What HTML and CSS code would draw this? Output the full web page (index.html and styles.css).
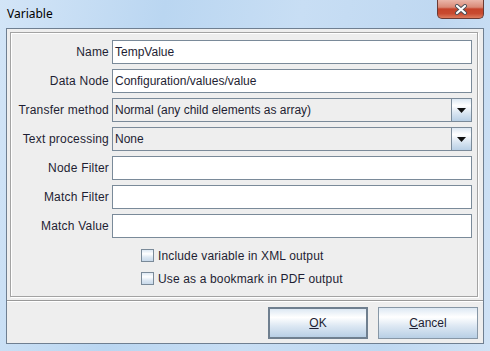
FILE: index.html
```html
<!DOCTYPE html>
<html>
  <head>
    <meta charset=utf-8>
    <title>Variable</title>
    <link rel="stylesheet" href="styles.css">
  </head>
  <body>
    <div class="window">
      <div class="titlebar">
        <span class="title">Variable</span>
        <div class="close">
          <svg width="14" height="11" viewBox="0 0 14 11">
            <path d="M3 2 L11 9 M11 2 L3 9" stroke="#4a4f58" stroke-width="4" stroke-linecap="round"/>
            <path d="M3 2 L11 9 M11 2 L3 9" stroke="#ffffff" stroke-width="2.2" stroke-linecap="round"/>
          </svg>
        </div>
      </div>
      <div class="client">
        <div class="panel">
          <div class="form">
            <label>Name</label>
            <div class="field">TempValue</div>
            <label>Data Node</label>
            <div class="field">Configuration/values/value</div>
            <label>Transfer method</label>
            <div class="combo">
              <span class="combo-value">Normal (any child elements as array)</span>
              <span class="combo-arrow"><svg width="9" height="5"><polygon points="0,0 9,0 4.5,5" fill="#111"/></svg></span>
            </div>
            <label>Text processing</label>
            <div class="combo">
              <span class="combo-value">None</span>
              <span class="combo-arrow"><svg width="9" height="5"><polygon points="0,0 9,0 4.5,5" fill="#111"/></svg></span>
            </div>
            <label>Node Filter</label>
            <div class="field"></div>
            <label>Match Filter</label>
            <div class="field"></div>
            <label>Match Value</label>
            <div class="field"></div>
          </div>
          <div class="checks">
            <div class="check"><span class="box"></span>Include variable in XML output</div>
            <div class="check"><span class="box"></span>Use as a bookmark in PDF output</div>
          </div>
        </div>
        <div class="buttons">
          <button class="btn default"><u>O</u>K</button>
          <button class="btn"><u>C</u>ancel</button>
        </div>
      </div>
    </div>
  </body>
</html>
```

FILE: styles.css
```css
body {
  margin: 0;
  background: #ffffff;
}

.window {
  width: 490px;
  height: 351px;
  display: flex;
  flex-direction: column;
  background: linear-gradient(100deg, #d3e5f7 0%, #bad6f1 30%, #c8def4 55%, #bfd8f1 80%, #d0e2f5 100%);
  font-family: "Liberation Sans", Arial, sans-serif;
  font-size: 12px;
  color: #1e1e33;
}

.titlebar {
  height: 28px;
  display: flex;
  align-items: flex-start;
}

.title {
  font-family: "Noto Sans", sans-serif;
  font-size: 12px;
  color: #000;
  padding: 5px 0 0 7px;
}

.close {
  margin-left: auto;
  margin-right: 6px;
  width: 45px;
  height: 18px;
  border: 1px solid #6a3a34;
  border-top: none;
  border-radius: 0 0 5px 5px;
  background: linear-gradient(#eab6a9 0%, #d98a77 40%, #c5432a 50%, #c84a30 75%, #dd7c5e 100%);
  display: flex;
  align-items: center;
  justify-content: center;
}

.client {
  margin: 0 6px;
  height: 316px;
  box-sizing: border-box;
  border: 1px solid #6f7f91;
  background: #eeeeee;
  display: flex;
  flex-direction: column;
}

.panel {
  margin: 3px 5px 0 3px;
  height: 265px;
  box-sizing: border-box;
  border: 1px solid #a3a3a3;
  box-shadow: inset 1px 1px 0 #fff, 1px 1px 0 #fff;
  padding: 7px 5px 6px 0;
}

.form {
  display: grid;
  grid-template-columns: 98px 360px;
  grid-auto-rows: 24px;
  column-gap: 3px;
  row-gap: 5px;
}

.form label {
  text-align: right;
  align-self: center;
  letter-spacing: 0.2px;
}

.field {
  box-sizing: border-box;
  border: 1px solid #7a8a99;
  background: #fff;
  padding-left: 2px;
  line-height: 22px;
}

.combo {
  box-sizing: border-box;
  border: 1px solid #7a8a99;
  background: #eeeeee;
  display: flex;
}

.combo-value {
  flex: 1;
  padding-left: 2px;
  line-height: 22px;
}

.combo-arrow {
  width: 19px;
  border-left: 1px solid #7a8a99;
  background: linear-gradient(#dde8f3 0%, #ffffff 30%, #dde8f3 60%, #b8cfe5 100%);
  display: flex;
  align-items: center;
  justify-content: center;
}

.checks {
  margin-top: 6px;
  padding-left: 130px;
}

.check {
  height: 23px;
  display: flex;
  align-items: center;
  gap: 4px;
  letter-spacing: 0.15px;
}

.box {
  width: 13px;
  height: 13px;
  box-sizing: border-box;
  border: 1px solid #7a8a99;
  background: linear-gradient(#dde8f3 0%, #ffffff 35%, #dde8f3 65%, #c8d9ea 100%);
}

.buttons {
  margin-top: 3px;
  border-top: 1px solid #999999;
  box-shadow: inset 0 1px 0 #fff;
  padding: 6px 5px 4px;
  display: flex;
  justify-content: flex-end;
  gap: 10px;
}

.btn {
  width: 100px;
  height: 32px;
  box-sizing: border-box;
  border: 1px solid #8797a6;
  background: linear-gradient(#dde8f3 0%, #ffffff 30%, #dde8f3 60%, #b8cfe5 100%);
  font-family: "Liberation Sans", Arial, sans-serif;
  font-size: 12px;
  color: #1e1e33;
  padding: 0;
}

.btn.default {
  border: 2px solid #6f7f8f;
}
```
